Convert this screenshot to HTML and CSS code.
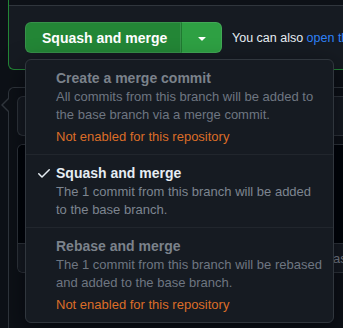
FILE: index.html
```html
<!DOCTYPE html>
<html lang="en">
<head>
  <meta charset="UTF-8">
  <meta name="viewport" content="width=device-width, initial-scale=1.0">
  <title>Merge options</title>
  <link rel="stylesheet" href="styles.css">
</head>
<body>
  <div class="merge-box">
    <div class="merge-top"></div>
    <div class="merge-actions">
      <div class="btn-group">
        <button class="btn-merge">Squash and merge</button>
        <button class="btn-caret" aria-label="Select merge method">
          <svg width="16" height="16" viewBox="0 0 16 16"><path fill="#ffffff" d="m4.427 7.427 3.396 3.396a.25.25 0 0 0 .354 0l3.396-3.396A.25.25 0 0 0 11.396 7H4.604a.25.25 0 0 0-.177.427Z"/></svg>
        </button>
      </div>
      <span class="merge-hint">You can also <a href="#">open this in GitHub Desktop</a></span>
    </div>
  </div>

  <div class="review">
    <div class="review-head"></div>
    <div class="diff">
      <div class="diff-code"></div>
      <div class="diff-foot"><span>as</span></div>
    </div>
  </div>

  <div class="merge-menu">
    <div class="menu-item disabled">
      <span class="menu-icon"></span>
      <div class="menu-text">
        <div class="menu-title">Create a merge commit</div>
        <div class="menu-desc">All commits from this branch will be added to the base branch via a merge commit.</div>
        <div class="menu-warn">Not enabled for this repository</div>
      </div>
    </div>
    <div class="menu-item selected">
      <span class="menu-icon">
        <svg width="16" height="16" viewBox="0 0 16 16"><path fill="#e6edf3" d="M13.78 4.22a.75.75 0 0 1 0 1.06l-7.25 7.25a.75.75 0 0 1-1.06 0L2.22 9.28a.75.75 0 0 1 1.06-1.06L6 10.94l6.72-6.72a.75.75 0 0 1 1.06 0Z"/></svg>
      </span>
      <div class="menu-text">
        <div class="menu-title">Squash and merge</div>
        <div class="menu-desc">The 1 commit from this branch will be added<br>to the base branch.</div>
      </div>
    </div>
    <div class="menu-item disabled">
      <span class="menu-icon"></span>
      <div class="menu-text">
        <div class="menu-title">Rebase and merge</div>
        <div class="menu-desc">The 1 commit from this branch will be rebased and added to the base branch.</div>
        <div class="menu-warn">Not enabled for this repository</div>
      </div>
    </div>
  </div>
</body>
</html>
```

FILE: styles.css
```css
body {
  margin: 0;
  background-color: #0d1117;
  color: #e6edf3;
  font-family: 'Liberation Sans', Arial, sans-serif;
  width: 343px;
  height: 328px;
  overflow: hidden;
  position: relative;
}

.merge-box {
  margin-left: 8px;
  background-color: #161b22;
  border-left: 1px solid #238636;
  border-bottom: 1px solid #238636;
  border-bottom-left-radius: 6px;
}

.merge-top {
  height: 5px;
  background-color: #0d1117;
  border-bottom: 1px solid #30363d;
}

.merge-actions {
  display: flex;
  align-items: center;
  gap: 10px;
  padding: 16px 0 16px 16px;
  white-space: nowrap;
  overflow: hidden;
}

.btn-group {
  display: flex;
  height: 31px;
}

.btn-group button {
  border: 1px solid rgba(240, 246, 252, 0.1);
  color: #ffffff;
  font-family: inherit;
  cursor: pointer;
}

.btn-merge {
  background-color: #238636;
  padding: 0 16px;
  font-size: 14px;
  font-weight: 700;
  border-radius: 6px 0 0 6px;
  width: 156px;
}

.btn-caret {
  background-color: #2ea043;
  width: 41px;
  padding: 0;
  border-left: 1px solid #1f7a31 !important;
  border-radius: 0 6px 6px 0;
  display: flex;
  align-items: center;
  justify-content: center;
}

.btn-caret svg {
  display: block;
}

.merge-hint {
  font-size: 12.5px;
  color: #e6edf3;
}

.merge-hint a {
  color: #2f81f7;
  text-decoration: none;
}

.review {
  margin: 17px 0 0 8px;
  height: 241px;
  border-top: 1px solid #30363d;
  border-left: 1px solid #30363d;
  border-top-left-radius: 6px;
  background-color: #0d1117;
  position: relative;
}

.review::before,
.review::after {
  content: "";
  position: absolute;
  top: 10px;
  border: 7px solid transparent;
}

.review::before {
  left: -15px;
  border-right-color: #30363d;
}

.review::after {
  left: -13px;
  border-right-color: #0d1117;
}

.review-head {
  margin: 8px 0 0 8px;
  height: 38px;
  border: 1px solid #30363d;
  border-right: none;
  border-radius: 6px 0 0 6px;
  background-color: #161b22;
}

.diff {
  margin: 8px 0 0 8px;
  border: 1px solid #30363d;
  border-right: none;
  border-radius: 6px 0 0 6px;
  overflow: hidden;
}

.diff-code {
  height: 98px;
  background-color: #010409;
  border-bottom: 1px solid #30363d;
}

.diff-foot {
  height: 28px;
  background-color: #161b22;
  display: flex;
  align-items: center;
  padding-left: 315px;
  font-size: 13px;
  color: #7d8590;
  white-space: nowrap;
  overflow: hidden;
}

.merge-menu {
  position: absolute;
  top: 59px;
  left: 25px;
  width: 309px;
  box-sizing: border-box;
  background-color: #161b22;
  border: 1px solid #30363d;
  border-radius: 6px;
  box-shadow: 0 8px 24px rgba(1, 4, 9, 0.6);
  overflow: hidden;
}

.menu-item {
  display: flex;
  padding: 8px 6px 8px 10px;
  border-bottom: 1px solid #21262d;
}

.menu-item:last-child {
  border-bottom: none;
}

.menu-icon {
  flex: 0 0 16px;
  margin-right: 4px;
  padding-top: 2px;
}

.menu-icon svg {
  display: block;
}

.menu-title {
  font-size: 14px;
  font-weight: 700;
  line-height: 20px;
  color: #e6edf3;
}

.menu-desc {
  font-size: 13px;
  line-height: 18px;
  color: #7d8590;
}

.menu-warn {
  margin-top: 4px;
  font-size: 13px;
  line-height: 18px;
  color: #db6d28;
}

.disabled .menu-title {
  color: #7b828b;
}

.disabled .menu-desc {
  color: #6e7681;
}
```
